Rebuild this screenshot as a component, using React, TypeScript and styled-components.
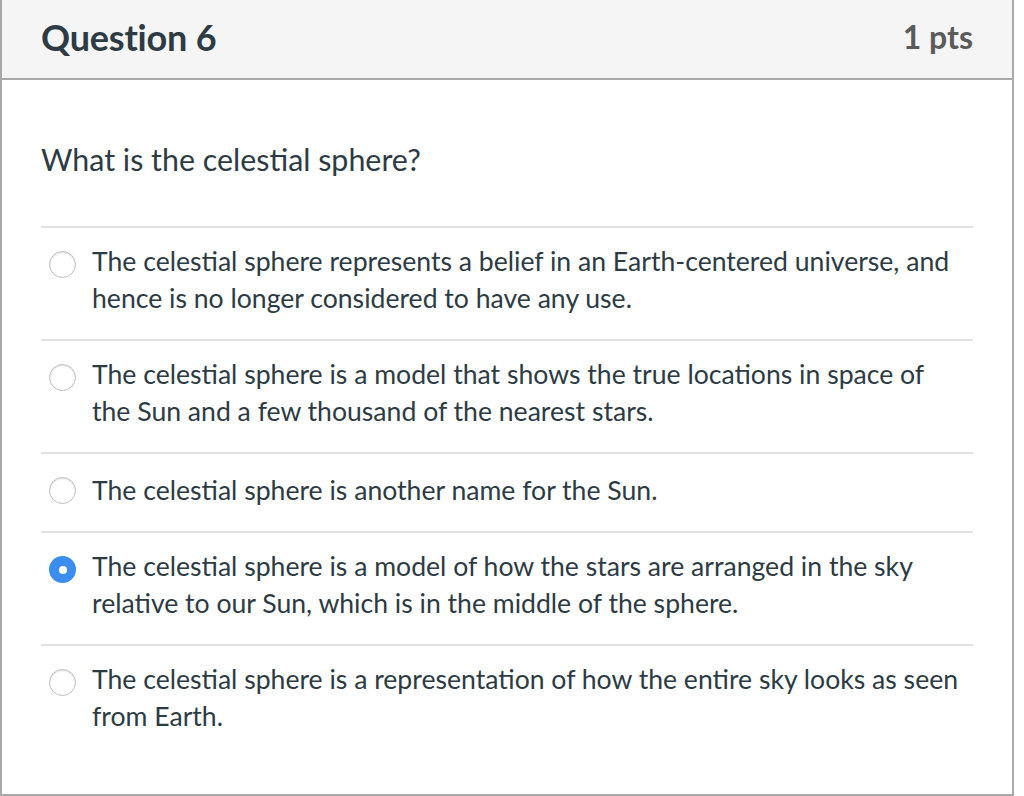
import styled, { createGlobalStyle } from "styled-components";

const GlobalStyle = createGlobalStyle`
  html, body {
    margin: 0;
    padding: 0;
    background: #ffffff;
  }
  body {
    font-family: Lato, "Noto Sans", "Liberation Sans", sans-serif;
    color: #2d3b45;
  }
`;

const StyledPanel = styled.div`
  width: 1014px;
  height: 796px;
  box-sizing: border-box;
  border: 2px solid #a9a9a9;
  border-top: none;
  display: flex;
  flex-direction: column;
`;

const StyledHeader = styled.div`
  display: flex;
  align-items: center;
  justify-content: space-between;
  height: 80px;
  box-sizing: border-box;
  padding: 0 39px 5px;
  background: #f5f5f5;
  border-bottom: 2px solid #a9a9a9;
`;

const StyledTitle = styled.h2`
  margin: 0;
  font-size: 36px;
  font-weight: 700;
  color: #2d3b45;
  letter-spacing: -0.2px;
`;

const StyledPoints = styled.span`
  font-size: 32px;
  font-weight: 700;
  color: #5b5b5b;
`;

const StyledBody = styled.div`
  padding: 60px 39px 0;
`;

const StyledQuestion = styled.p`
  margin: 0 0 47px;
  font-size: 30.4px;
  line-height: 39px;
`;

const StyledAnswers = styled.div`
  display: flex;
  flex-direction: column;
`;

const StyledAnswer = styled.label`
  display: flex;
  align-items: flex-start;
  gap: 16px;
  padding: 15px 10px 22px 8px;
  border-top: 2px solid #dfe1e3;
`;

type RadioProps = {
  checked?: boolean;
};

const StyledRadio = styled.span<RadioProps>`
  flex: none;
  width: 27px;
  height: 27px;
  margin-top: 8px;
  box-sizing: border-box;
  border-radius: 50%;
  display: flex;
  align-items: center;
  justify-content: center;
  background: ${({ checked }) => (checked ? "#3b8ef0" : "#ffffff")};
  border: ${({ checked }) => (checked ? "none" : "1.5px solid #bdbdbd")};
  box-shadow: ${({ checked }) =>
    checked ? "none" : "inset 0 1px 2px rgba(0, 0, 0, 0.12)"};
  &::after {
    content: "";
    display: ${({ checked }) => (checked ? "block" : "none")};
    width: 8px;
    height: 8px;
    border-radius: 50%;
    background: #ffffff;
  }
`;

const StyledAnswerText = styled.span`
  min-height: 40px;
  display: flex;
  align-items: flex-end;
  font-size: 26.6px;
  line-height: 37px;
  color: #2d3b45;
`;

const answers = [
  {
    text: "The celestial sphere represents a belief in an Earth-centered universe, and hence is no longer considered to have any use.",
    checked: false,
  },
  {
    text: "The celestial sphere is a model that shows the true locations in space of the Sun and a few thousand of the nearest stars.",
    checked: false,
  },
  {
    text: "The celestial sphere is another name for the Sun.",
    checked: false,
  },
  {
    text: "The celestial sphere is a model of how the stars are arranged in the sky relative to our Sun, which is in the middle of the sphere.",
    checked: true,
  },
  {
    text: "The celestial sphere is a representation of how the entire sky looks as seen from Earth.",
    checked: false,
  },
];

export default function App() {
  return (
    <>
      <GlobalStyle />
      <StyledPanel>
        <StyledHeader>
          <StyledTitle>Question 6</StyledTitle>
          <StyledPoints>1 pts</StyledPoints>
        </StyledHeader>
        <StyledBody>
          <StyledQuestion>What is the celestial sphere?</StyledQuestion>
          <StyledAnswers>
            {answers.map((a) => (
              <StyledAnswer key={a.text}>
                <StyledRadio checked={a.checked} />
                <StyledAnswerText>{a.text}</StyledAnswerText>
              </StyledAnswer>
            ))}
          </StyledAnswers>
        </StyledBody>
      </StyledPanel>
    </>
  );
}
